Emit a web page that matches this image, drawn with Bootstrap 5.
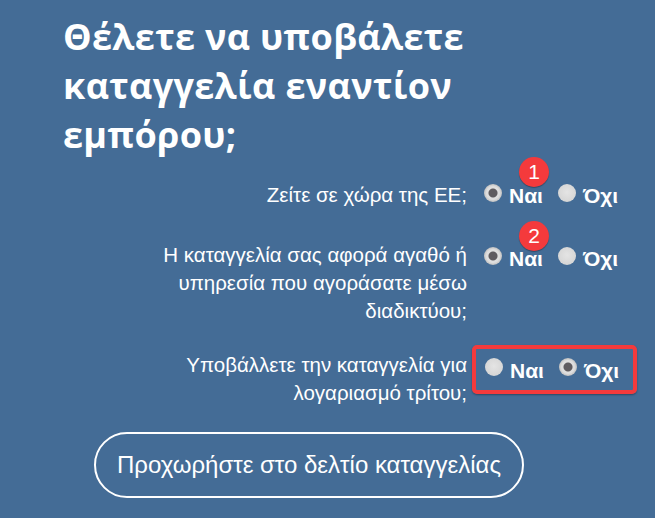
<!DOCTYPE html>
<html lang="el"><head><meta charset="utf-8"><title>Καταγγελία</title>
<link rel="stylesheet" href="https://cdn.jsdelivr.net/npm/bootstrap@5.3.0/dist/css/bootstrap.min.css">
<style>
html,body{height:100%;overflow:hidden}
body{background:#446c96;color:#fff;font-family:"Liberation Sans",sans-serif}
.page-wrap{padding:12px 0 0 64px;width:655px}
.page-title{font-family:"Open Sans",sans-serif;font-weight:700;font-size:36px;line-height:49px;letter-spacing:.35px;margin:0 0 22px -1px;width:420px}
.q-row{display:flex;width:591px;margin-bottom:26px}
.q-first{margin-bottom:32px}
.q-label{width:403px;text-align:right;font-size:20.5px;line-height:28px;flex:none}
.q-opts{position:relative;display:flex;align-items:center;height:28px;padding-left:17px;flex:none}
.q-low{padding-top:6px}
.opt{display:flex;align-items:center;font-weight:700;font-size:21px;line-height:28px;margin-right:15px;margin-bottom:0;padding-top:2px}
.opt input{appearance:none;width:18px;height:18px;border-radius:50%;margin:0 7px 7px 0;background:radial-gradient(circle at 50% 45%,#e4e4e4,#d6d6d6 70%,#b9b9b9);flex:none}
.opt input:checked{background:radial-gradient(circle,#5f5c60 0 4px,#dedede 5px 6.5px,#c0c0c0 9px)}
.num{position:absolute;width:30px;height:30px;border-radius:50%;background:#f43a3c;color:#fff;font-size:21px;line-height:30px;text-align:center;left:52px;top:-24px;box-shadow:0 1px 1px rgba(0,0,0,.3)}
.q-low .num{top:-20px}
.mark-box{border:4px solid #f43a3c;border-radius:5px;box-shadow:0 1px 2px rgba(0,0,0,.35);height:49px;width:165px;padding-left:9px;margin:-6px 0 0 5px}
.go-btn{font-size:24px;color:#fff;border:2px solid #fff;border-radius:33px;padding:0 21px;height:66px;line-height:62px;background:transparent;margin:-1px 0 0 30px;white-space:nowrap}
.go-btn:hover{color:#fff}
</style></head><body>
<div class="page-wrap">
<h1 class="page-title">Θέλετε να υποβάλετε καταγγελία εναντίον εμπόρου;</h1>
<form>
<div class="q-row q-first"><div class="q-label">Ζείτε σε χώρα της ΕΕ;</div>
<div class="q-opts"><span class="num">1</span>
<label class="opt"><input type="radio" name="a" checked>Ναι</label><label class="opt"><input type="radio" name="a">Όχι</label></div></div>
<div class="q-row"><div class="q-label">Η καταγγελία σας αφορά αγαθό ή<br>υπηρεσία που αγοράσατε μέσω<br>διαδικτύου;</div>
<div class="q-opts q-low"><span class="num">2</span>
<label class="opt"><input type="radio" name="b" checked>Ναι</label><label class="opt"><input type="radio" name="b">Όχι</label></div></div>
<div class="q-row"><div class="q-label">Υποβάλλετε την καταγγελία για<br>λογαριασμό τρίτου;</div>
<div class="q-opts mark-box">
<label class="opt"><input type="radio" name="c">Ναι</label><label class="opt"><input type="radio" name="c" checked>Όχι</label></div></div>
<div class="q-row"><button type="button" class="btn go-btn">Προχωρήστε στο δελτίο καταγγελίας</button></div>
</form>
</div>
</body></html>
